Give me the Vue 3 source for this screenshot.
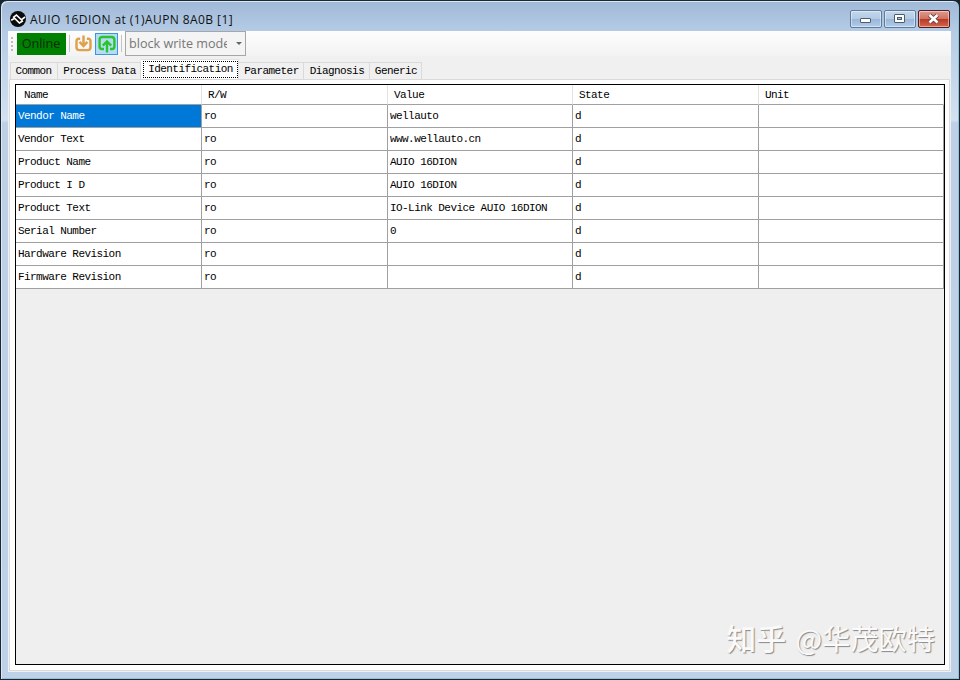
<template>
  <div class="window">
    <header class="titlebar">
      <svg class="app-icon" viewBox="0 0 16 16">
        <circle cx="8" cy="8" r="8" fill="#0a0a0a" />
        <path d="M3 6.6 L6.4 4 L11.4 8.8 L15 6 M1.2 9.2 L4.6 7.2 L9.4 12 L13 9.8" fill="none" stroke="#fff" stroke-width="1.6" />
      </svg>
      <span class="title">AUIO 16DION at (1)AUPN 8A0B [1]</span>
      <div class="window-buttons">
        <button class="win-btn">
          <svg viewBox="0 0 32 18">
            <rect x="10.5" y="8.5" width="10" height="4" rx="0.5" fill="#fff" stroke="#4c5b70" />
          </svg>
        </button>
        <button class="win-btn">
          <svg viewBox="0 0 32 18">
            <rect x="10.5" y="4.5" width="10" height="8" rx="0.5" fill="#fff" stroke="#4c5b70" />
            <rect x="13.5" y="7.5" width="4" height="2" fill="#a9c4e2" stroke="#4c5b70" />
          </svg>
        </button>
        <button class="win-btn close">
          <svg viewBox="0 0 32 18">
            <path d="M11.5 5 L19.5 12.5 M19.5 5 L11.5 12.5" stroke="#6b3a3e" stroke-width="4.4" />
            <path d="M11.5 5 L19.5 12.5 M19.5 5 L11.5 12.5" stroke="#fff" stroke-width="2.6" />
          </svg>
        </button>
      </div>
    </header>

    <main class="client">
      <div class="toolbar">
        <div class="grip"><i v-for="n in 4" :key="n"></i></div>
        <span class="status">Online</span>
        <span class="separator"></span>
        <button class="tool">
          <svg viewBox="0 0 18 18" fill="none" stroke="#e0a04c" stroke-width="2.6">
            <path d="M5.5 4 H4 Q1.6 4 1.6 6.5 V13 Q1.6 16 4.5 16 H13.5 Q16.4 16 16.4 13 V6.5 Q16.4 4 14 4 H12.5" />
            <path d="M9 0.5 V11 M4.8 7.4 L9 11.6 L13.2 7.4" />
          </svg>
        </button>
        <button class="tool active">
          <svg viewBox="0 0 18 18" fill="none" stroke="#2cc42c" stroke-width="2.4">
            <path d="M6 14 H4 Q1.6 14 1.6 11.5 V5 Q1.6 2 4.5 2 H13.5 Q16.4 2 16.4 5 V11.5 Q16.4 14 14 14 H12" />
            <path d="M9 17.5 V7 M4.8 10.6 L9 6.4 L13.2 10.6" />
          </svg>
        </button>
        <span class="separator second"></span>
        <div class="select">
          <span class="select-text">block write mode</span>
          <i class="arrow"></i>
        </div>
      </div>

      <nav class="tabs">
        <div
          v-for="tab in tabs"
          :key="tab.label"
          class="tab"
          :class="{ current: tab.label === activeTab }"
          :style="{ width: tab.width + 'px' }"
        >
          <span>{{ tab.label }}</span>
        </div>
      </nav>

      <section class="page">
        <div class="grid">
          <div class="row head">
            <div v-for="col in columns" :key="col" class="cell">{{ col }}</div>
          </div>
          <div v-for="(row, r) in rows" :key="r" class="row">
            <div
              v-for="(value, c) in row"
              :key="c"
              class="cell"
              :class="{ selected: r === 0 && c === 0 }"
            >{{ value }}</div>
          </div>
        </div>
      </section>
    </main>

    <div class="watermark"><span class="brand">知乎</span> @华茂欧特</div>
  </div>
</template>

<script setup>
import { ref } from 'vue'

const activeTab = ref('Identification')

const tabs = [
  { label: 'Common', width: 48 },
  { label: 'Process Data', width: 83 },
  { label: 'Identification', width: 98 },
  { label: 'Parameter', width: 65 },
  { label: 'Diagnosis', width: 66 },
  { label: 'Generic', width: 52 }
]

const columns = ['Name', 'R/W', 'Value', 'State', 'Unit']

const rows = [
  ['Vendor Name', 'ro', 'wellauto', 'd', ''],
  ['Vendor Text', 'ro', 'www.wellauto.cn', 'd', ''],
  ['Product Name', 'ro', 'AUIO 16DION', 'd', ''],
  ['Product I D', 'ro', 'AUIO 16DION', 'd', ''],
  ['Product Text', 'ro', 'IO-Link Device AUIO 16DION', 'd', ''],
  ['Serial Number', 'ro', '0', 'd', ''],
  ['Hardware Revision', 'ro', '', 'd', ''],
  ['Firmware Revision', 'ro', '', 'd', '']
]
</script>

<style>
body {
  margin: 0;
  background: #17232e;
}
</style>

<style scoped>
.window {
  position: relative;
  box-sizing: border-box;
  width: 960px;
  height: 680px;
  padding: 0 8px 7px 7px;
  border: 1px solid #1b2733;
  border-radius: 7px 7px 0 0;
  background: linear-gradient(180deg, #9fb9d8 0, #b5cbe5 30px, #d3e1f1 119px, #bdd0e8 122px, #bdd1e8 100%);
  box-shadow: inset 1px 1px 0 #dce9f5, inset -1px -1px 0 #8fc3d3;
  overflow: hidden;
}

.titlebar {
  display: flex;
  align-items: flex-start;
  height: 30px;
  padding-left: 2px;
}

.app-icon {
  width: 16px;
  height: 16px;
  margin-top: 10px;
}

.title {
  margin: 10px 0 0 4px;
  font: 12px/18px "Open Sans", "Noto Sans", sans-serif;
  letter-spacing: 0.42px;
  color: #111;
  white-space: pre;
}

.window-buttons {
  display: flex;
  gap: 2px;
  margin: 9px 1px 0 auto;
}

.win-btn {
  box-sizing: border-box;
  width: 32px;
  height: 18px;
  padding: 0;
  border: 1px solid #5f7b9c;
  border-radius: 2px;
  background: linear-gradient(180deg, #c5d8ec 0, #b3cae4 48%, #98b6d8 50%, #b2cce8 100%);
  box-shadow: inset 0 0 0 1px rgba(255, 255, 255, 0.45);
}

.win-btn svg {
  display: block;
  width: 32px;
  height: 18px;
  margin: -1px;
}

.win-btn.close {
  border-color: #571a1e;
  background: linear-gradient(180deg, #dd9a8f 0, #cf7363 48%, #b93722 50%, #d0684e 100%);
}

.client {
  display: flex;
  flex-direction: column;
  box-sizing: border-box;
  height: 641px;
  background: #f0f0f0;
}

.toolbar {
  display: flex;
  align-items: center;
  height: 25px;
  background: linear-gradient(180deg, #fdfdfd, #f3f3f3);
  font: 12.6px/21px "Open Sans", "Noto Sans", sans-serif;
}

.grip {
  display: flex;
  flex-direction: column;
  gap: 2px;
  width: 9px;
  padding-left: 3px;
  box-sizing: border-box;
}

.grip i {
  width: 2px;
  height: 2px;
  background: #bdbdbd;
}

.status {
  box-sizing: border-box;
  width: 49px;
  height: 22px;
  padding-right: 1px;
  background: #008000;
  color: #0b2b0b;
  text-align: center;
}

.separator {
  width: 1px;
  height: 17px;
  margin: 0 2px 0 3px;
  background: #c4c4c4;
}

.separator.second {
  margin: 0 3px;
}

.tool {
  display: flex;
  align-items: center;
  justify-content: center;
  box-sizing: border-box;
  width: 23px;
  height: 22px;
  padding: 0;
  border: 0;
  background: none;
}

.tool svg {
  width: 17px;
  height: 17px;
}

.tool.active {
  border: 1px solid #3b95e0;
  background: #b5dcf5;
}

.tool.active svg {
  width: 18px;
  height: 18px;
}

.select {
  display: flex;
  align-items: center;
  box-sizing: border-box;
  width: 121px;
  height: 25px;
  padding: 0 2px 0 3px;
  border: 1px solid #a6a6a6;
  background: #f4f4f4;
  color: #777;
}

.select-text {
  width: 98px;
  overflow: hidden;
  white-space: nowrap;
}

.arrow {
  margin-left: 9px;
  border: 3px solid transparent;
  border-top-color: #666;
  border-bottom: 0;
}

.tabs,
.grid {
  font-family: "Liberation Mono", monospace;
  font-size: 11px;
  letter-spacing: -0.56px;
  color: #000;
}

.tabs {
  display: flex;
  align-items: flex-end;
  height: 23px;
  padding-left: 2px;
}

.tab {
  box-sizing: border-box;
  height: 17px;
  border: 1px solid #dadada;
  border-left-width: 0;
  border-bottom: 0;
  padding-left: 1px;
  line-height: 17px;
  text-align: center;
  white-space: nowrap;
}

.tab:first-child {
  padding: 0 1px 0 0;
  border-left-width: 1px;
}

.tab.current {
  height: 20px;
  padding: 1px 0 1px 2px;
  border-color: #e3e3e3;
  background: #fff;
  line-height: 15px;
}

.tab.current span {
  display: block;
  box-sizing: border-box;
  height: 17px;
  border: 1px dotted #000;
}

.page {
  box-sizing: border-box;
  flex: 1;
  margin: 0 1px 1px;
  padding: 4px 5px 5px;
  border: 1px solid #dadada;
  background: #fff;
}

.grid {
  box-sizing: border-box;
  width: 930px;
  height: 581px;
  border: 1px solid #000;
  background: #efefef;
}

.row {
  display: grid;
  grid-template-columns: 186px 186px 185px 186px 185px;
  grid-template-rows: 100%;
  height: 23px;
}

.row.head {
  height: 20px;
}

.cell {
  box-sizing: border-box;
  padding-left: 2px;
  border-right: 1px solid #a0a0a0;
  border-bottom: 1px solid #a0a0a0;
  background: #fff;
  line-height: 23px;
  white-space: pre;
}

.head .cell {
  padding-left: 6px;
  border-right-color: #e2e2e2;
  line-height: 21px;
}

.head .cell:first-child {
  padding-left: 8px;
}

.cell.selected {
  background: #0078d7;
  color: #fff;
}

.watermark {
  position: absolute;
  right: 24px;
  bottom: 21px;
  font: 28.2px/40px "Noto Sans CJK SC", sans-serif;
  color: #fafafa;
  text-shadow: 1px 1px 1px #888;
  white-space: nowrap;
}

.brand {
  margin-right: 3px;
  font-size: 30px;
  font-weight: 500;
}
</style>
